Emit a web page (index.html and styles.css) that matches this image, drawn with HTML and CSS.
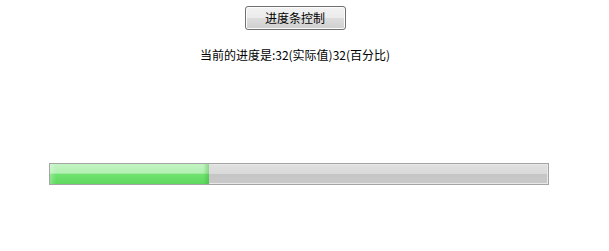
FILE: index.html
```html
<!DOCTYPE html>
<html lang="zh">
<head>
<meta charset="utf-8">
<title>进度条控制</title>
<link rel="stylesheet" href="styles.css">
</head>
<body>
<div class="page">
  <button class="btn" type="button">进度条控制</button>
  <div class="status">当前的进度是:32(实际值)32(百分比)</div>
  <div class="progress">
    <div class="fill" style="width: 32%"></div>
  </div>
</div>
</body>
</html>
```
FILE: styles.css
```css
html, body {
  margin: 0;
  padding: 0;
  background: #ffffff;
}
body {
  font-family: "Noto Sans CJK SC", "Liberation Sans", sans-serif;
  font-size: 12px;
  color: #000;
}
.page {
  display: flex;
  flex-direction: column;
  align-items: center;
  width: 590px;
}
.btn {
  margin-top: 6px;
  width: 101px;
  height: 24px;
  padding: 0;
  font-family: "Noto Sans CJK SC", "Liberation Sans", sans-serif;
  font-size: 12px;
  line-height: 16px;
  color: #000;
  border: 1px solid #707070;
  border-radius: 3px;
  background: linear-gradient(to bottom, #f2f2f2 0%, #ebebeb 50%, #dddddd 51%, #cfcfcf 100%);
  box-shadow: inset 0 0 0 1px #fcfcfc;
}
.status {
  margin-top: 17px;
  line-height: 16px;
}
.progress {
  align-self: flex-start;
  margin-left: 49px;
  margin-top: 100px;
  width: 498px;
  height: 20px;
  border: 1px solid #a4a4a4;
  background: linear-gradient(to bottom, #e0e0e0 0%, #dadada 48%, #c6c6c6 52%, #c9c9c9 100%);
  box-shadow: inset 0 0 0 1px #e8e8e8;
  display: flex;
}
.fill {
  height: 100%;
  background:
    linear-gradient(to right, rgba(255,255,255,0.25) 0px, rgba(255,255,255,0) 6px, rgba(255,255,255,0) calc(100% - 6px), rgba(40,170,40,0.35) 100%),
    linear-gradient(to bottom, #c2f4c2 0%, #b4f0b4 45%, #70e270 52%, #5fd95f 100%);
}
```
